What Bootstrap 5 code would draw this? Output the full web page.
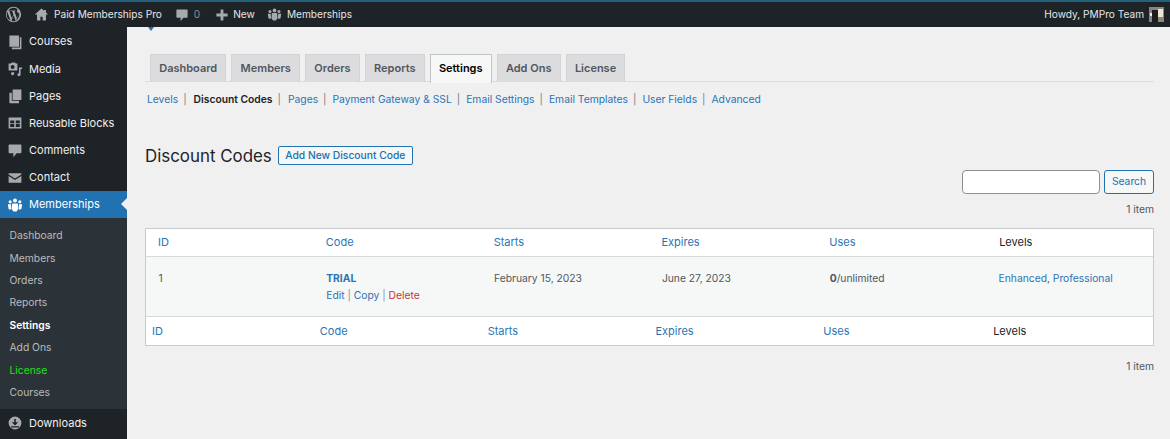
<!DOCTYPE html>
<html lang="en"><head><meta charset="utf-8"><title>Discount Codes</title>
<link href="https://cdn.jsdelivr.net/npm/bootstrap@5.3.0/dist/css/bootstrap.min.css" rel="stylesheet">
<style>
html,body{height:100%;overflow:hidden}
body{font-family:Inter,"Noto Sans",sans-serif;font-size:10.5px;background:#f0f0f1;color:#50575e}
a{text-decoration:none;color:#2b74b4}
.topbar{height:27px;background:#1d2327;border-top:2px solid #22607c;color:#e4e6e8;font-size:10.15px;padding:0 6px 0 5px}
.topbar svg{display:block;fill:#a7aaad}
.barhome{margin-left:4px}.barsite{margin-left:1px}.barcomment{margin-left:13px}.barzero{margin-left:5px;color:#8c8f94}
.barplus{margin-left:15px}.barnew{margin-left:4px}.barpeople{margin-left:12px}.barmem{margin-left:5px}
.shell{height:412px}
.sidebar{width:127px;background:#1d2327;flex:none;color:#f0f0f1;font-size:11px;padding-top:1px}
.mitem{height:27.2px;padding-left:7px;gap:6px}
.mitem svg{width:16px;height:16px;fill:#a7aaad;flex:none}
.mitem.on{background:#2271b1;color:#fff;position:relative}
.mitem.on svg{fill:#fff}
.mitem.on::after{content:"";position:absolute;right:0;top:7px;border:6.5px solid transparent;border-right-color:#f0f0f1;border-left:0}
.submenu{background:#2c3338;padding:6px 0 6px;font-size:10.3px;color:#b8bbbe}
.submenu div{height:22.4px;line-height:22.4px;padding-left:9.5px}
.submenu .cur{color:#fff;font-weight:600}
.submenu .lic{color:#1fe01f}
.mainarea{padding:0 16px 0 18px;position:relative}
.flag{position:absolute;left:21px;top:0;width:0;height:0;border:3px solid transparent;border-top:4px solid #2271b1;border-bottom:0}
.tabbar{margin-top:27px;padding-left:5px;border-bottom:1px solid #dcdcde;gap:5px;height:28px}
.tabitem{height:28px;line-height:26px;background:#dcdcde;border:1px solid #d2d3d5;border-bottom:0;padding:0 8.2px;font-size:11px;font-weight:600;color:#50575e}
.tabitem.act{color:#000;border-color:#c3c4c7;height:29px;background:#f6f7f7}
.subnav{margin-top:10px;height:14px;line-height:14px;font-size:10.3px;padding-left:2px}
.subnav span{color:#777c81}
.subnav a{margin-right:5px}
.subnav b{color:#1d2327;font-weight:600;margin-right:5px}
.subnav .sp{margin-right:6px}
.subnav .spw{margin-right:7px}
.headline{margin-top:39px;gap:6px;height:20px}
.headline h1{font-size:16.9px;font-weight:400;margin:2px 0 0;color:#1d2327;line-height:20px}
.addbtn{font-size:10.3px;font-weight:500;color:#2271b1;background:#f6f7f7;border:1px solid #2271b1;border-radius:2px;height:19px;width:135px;line-height:17px;text-align:center}
.searchrow{margin-top:5px;height:24px;gap:4px}
.searchin{width:138px;height:24px;border:1px solid #8c8f94;border-radius:4px;background:#fff}
.searchbtn{width:50px;height:24px;border:1px solid #2271b1;border-radius:3px;background:#f6f7f7;color:#2271b1;font-size:10.3px;padding:0}
.countline{text-align:right;font-size:10.3px;height:14px;line-height:14px;margin-top:8px}
table.codes{table-layout:fixed;width:1009px;border-collapse:separate;border-spacing:0;border:1px solid #c9cbcd;background:#fff;margin:12px 0 13px;font-size:10.3px}
.codes th,.codes td{font-weight:400;vertical-align:top}
.codes thead th{height:28px;padding:6px 0 0 12px;border-bottom:1px solid #d8d9da;font-size:11px;line-height:14px}
.codes tfoot th{height:29px;padding:7px 0 0 6px;border-top:1px solid #d8d9da;font-size:11px;line-height:14px}
.codes tbody td{height:59px;background:#f6f7f7;padding:14px 0 0 12.4px;line-height:14px}
.codes thead .lv{color:#1d2327;padding-left:14px}
.codes tfoot .lv{color:#1d2327;padding-left:8px}
.codes tbody .lvcell{padding-left:13.4px}
.rowacts{margin-top:3px;color:#8c8f94}
.rowacts .del{color:#c0393b}
.avatar{width:15px;height:15px;background:#8a8580;display:block;margin-left:5px}
</style></head>
<body>
<div class="topbar d-flex align-items-center">
 <svg width="17" height="17" viewBox="0 0 20 20" class="me-2"><path d="M10 1a9 9 0 1 0 0 18 9 9 0 0 0 0-18zM2 10c0-1.200.3-2.300.7-3.300l3.800 10.500A8 8 0 0 1 2 10zm8 8c-.8 0-1.500-.1-2.300-.3l2.400-7 2.500 6.800v.2c-.8.200-1.700.3-2.600.3zm1.100-11.800c.5 0 .9-.1.900-.1.400 0 .4-.7 0-.7 0 0-1.300.1-2.100.1s-2.100-.1-2.100-.1c-.4 0-.5.700 0 .7 0 0 .4.100.8.100l1.200 3.400-1.700 5.200-2.900-8.600c.5 0 .9-.1.900-.1.400 0 .4-.7 0-.7 0 0-1.300.1-2.100.1h-.5A8 8 0 0 1 15.500 4.200h-.1c-.8 0-1.400.7-1.400 1.400 0 .7.400 1.200.8 1.900.3.500.7 1.200.7 2.200 0 .7-.3 1.500-.6 2.600l-.8 2.700zM13 17l2.400-7c.5-1.100.6-2 .6-2.800 0-.3 0-.6-.1-.8A8 8 0 0 1 13 17z"/></svg>
 <svg width="15" height="15" viewBox="0 0 20 20" class="me-1 barhome"><path d="M10 2 1 10h3v8h4.500v-5h3v5H16v-8h3l-3-2.700V4h-2.500v1.100z"/></svg>
 <span class="barsite">Paid Memberships Pro</span>
 <svg class="barcomment" width="14" height="14" viewBox="0 0 20 20"><path d="M3 2h14a1 1 0 0 1 1 1v10a1 1 0 0 1-1 1h-5l-4 5v-5H3a1 1 0 0 1-1-1V3a1 1 0 0 1 1-1z"/></svg>
 <span class="barzero">0</span>
 <svg class="barplus" width="14" height="14" viewBox="0 0 20 20"><path d="M8 2h4v6h6v4h-6v6H8v-6H2V8h6z"/></svg>
 <span class="barnew">New</span>
 <svg class="barpeople" width="15" height="15" viewBox="0 0 20 20"><circle cx="10" cy="4.500" r="2.500"/><circle cx="4" cy="6" r="2"/><circle cx="16" cy="6" r="2"/><path d="M6.500 8h7l.5 7-2 3H8l-2-3zM1 9h4l.5 6L4 16l-2-1zM15 9h4l-1 6-2 1-1.500-1z"/></svg>
 <span class="barmem">Memberships</span>
 <span class="ms-auto">Howdy, PMPro Team</span>
 <svg class="avatar" viewBox="0 0 15 15"><rect width="15" height="15" fill="#8a8580"/><rect x="3" y="3" width="6" height="12" fill="#1f1d1c"/><rect x="9" y="2" width="5" height="8" fill="#ece6d8"/><rect x="1" y="6" width="2" height="3" fill="#eee"/></svg>
</div>
<div class="shell d-flex">
 <nav class="sidebar d-flex flex-column">
  <div class="mitem d-flex align-items-center"><svg viewBox="0 0 20 20"><path d="M3 2h12v14H3zM16 4h2v15H6v-2h10z"/></svg>Courses</div>
  <div class="mitem d-flex align-items-center"><svg viewBox="0 0 20 20"><path d="M2 3h3l1-1h4l1 1h2v9H2zm5 2a2.500 2.500 0 1 0 0 5 2.500 2.500 0 0 0 0-5zM15 8h4v2h-2v7a2 2 0 1 1-2-2zM6 14h3v2a2 2 0 1 1-3-2z"/></svg>Media</div>
  <div class="mitem d-flex align-items-center"><svg viewBox="0 0 20 20"><path d="M7 2h11v13H7zM3 6h3v10h9v3H3z"/></svg>Pages</div>
  <div class="mitem d-flex align-items-center"><svg viewBox="0 0 20 20"><path d="M2 3h16v14H2zm2 4v3h5V7zm7 0v3h5V7zm-7 4v4h5v-4zm7 0v4h5v-4z"/></svg>Reusable Blocks</div>
  <div class="mitem d-flex align-items-center"><svg viewBox="0 0 20 20"><path d="M3 3h14a1 1 0 0 1 1 1v9a1 1 0 0 1-1 1h-5l-4 5v-5H3a1 1 0 0 1-1-1V4a1 1 0 0 1 1-1z"/></svg>Comments</div>
  <div class="mitem d-flex align-items-center"><svg viewBox="0 0 20 20"><path d="M2 4h16v1.500l-8 5-8-5zm0 3.500 8 5 8-5V16H2z"/></svg>Contact</div>
  <div class="mitem on d-flex align-items-center"><svg viewBox="0 0 20 20"><circle cx="10" cy="4.500" r="2.500"/><circle cx="4" cy="6" r="2"/><circle cx="16" cy="6" r="2"/><path d="M6.500 8h7l.5 7-2 3H8l-2-3zM1 9h4l.5 6L4 16l-2-1zM15 9h4l-1 6-2 1-1.500-1z"/></svg>Memberships</div>
  <div class="submenu">
   <div>Dashboard</div><div>Members</div><div>Orders</div><div>Reports</div><div class="cur">Settings</div><div>Add Ons</div><div class="lic">License</div><div>Courses</div>
  </div>
  <div class="mitem d-flex align-items-center"><svg viewBox="0 0 20 20"><path fill-rule="evenodd" d="M10 2a8 8 0 1 0 0 16 8 8 0 0 0 0-16zM9 5h2v4h3l-4 4-4-4h3zM5 14h10v1.500H5z"/></svg>Downloads</div>
 </nav>
 <main class="mainarea flex-grow-1">
  <i class="flag"></i>
  <div class="tabbar d-flex">
   <a class="tabitem" href="#">Dashboard</a><a class="tabitem" href="#">Members</a><a class="tabitem" href="#">Orders</a><a class="tabitem" href="#">Reports</a><a class="tabitem act" href="#">Settings</a><a class="tabitem" href="#">Add Ons</a><a class="tabitem" href="#">License</a>
  </div>
  <div class="subnav d-flex">
   <a href="#">Levels</a><span class="spw">|</span><b>Discount Codes</b><span class="spw">|</span><a href="#">Pages</a><span class="sp">|</span><a href="#">Payment Gateway &amp; SSL</a><span class="sp">|</span><a href="#">Email Settings</a><span class="sp">|</span><a href="#">Email Templates</a><span class="sp">|</span><a href="#">User Fields</a><span class="sp">|</span><a href="#">Advanced</a>
  </div>
  <div class="headline d-flex align-items-center"><h1>Discount Codes</h1><a class="addbtn" href="#">Add New Discount Code</a></div>
  <div class="searchrow d-flex justify-content-end"><input class="searchin" type="text" aria-label="Search"><button class="searchbtn" type="button">Search</button></div>
  <div class="countline">1 item</div>
  <table class="codes">
   <thead><tr><th><a href="#">ID</a></th><th><a href="#">Code</a></th><th><a href="#">Starts</a></th><th><a href="#">Expires</a></th><th><a href="#">Uses</a></th><th class="lv">Levels</th></tr></thead>
   <tbody><tr><td>1</td><td><a href="#"><strong>TRIAL</strong></a><div class="rowacts"><a href="#">Edit</a> | <a href="#">Copy</a> | <a class="del" href="#">Delete</a></div></td><td>February 15, 2023</td><td>June 27, 2023</td><td><strong>0</strong>/unlimited</td><td class="lvcell"><a href="#">Enhanced</a>, <a href="#">Professional</a></td></tr></tbody>
   <tfoot><tr><th><a href="#">ID</a></th><th><a href="#">Code</a></th><th><a href="#">Starts</a></th><th><a href="#">Expires</a></th><th><a href="#">Uses</a></th><th class="lv">Levels</th></tr></tfoot>
  </table>
  <div class="countline mt-0">1 item</div>
 </main>
</div>
<script src="https://cdn.jsdelivr.net/npm/bootstrap@5.3.0/dist/js/bootstrap.bundle.min.js"></script>
</body></html>
